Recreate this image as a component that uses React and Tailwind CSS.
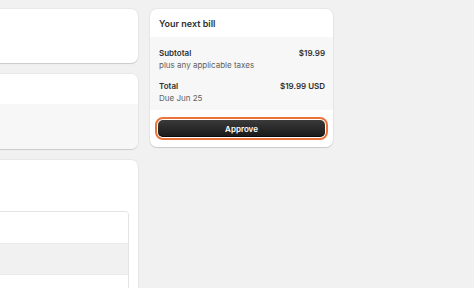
import React from 'react';

const cardShadow = 'shadow-[0_1px_1px_rgba(0,0,0,0.13),0_0_0_1px_rgba(0,0,0,0.035)]';

const BillRow = ({ label, note, amount }) => (
  <div className="flex justify-between">
    <div className="flex flex-col">
      <span className="font-semibold text-[#303030]">{label}</span>
      <span className="text-[#616161]">{note}</span>
    </div>
    <span className="font-semibold text-[#303030]">{amount}</span>
  </div>
);

export default function App() {
  return (
    <div
      className="w-[474px] h-[288px] overflow-hidden bg-[#f1f1f1] flex gap-3 pt-[9px] text-[8px] leading-[12px]"
      style={{ fontFamily: 'Inter, "Noto Sans", sans-serif' }}
    >
      {/* left column, partly cut off */}
      <div className="-ml-[20px] w-[158px] shrink-0 flex flex-col gap-[11px]">
        <div className={`h-[54px] shrink-0 bg-white rounded-[7px] ${cardShadow}`} />

        <div className={`h-[75px] shrink-0 bg-white rounded-[7px] overflow-hidden flex flex-col ${cardShadow}`}>
          <div className="h-[30px] bg-white" />
          <div className="flex-1 bg-[#f7f7f7]" />
        </div>

        <div className={`h-[200px] shrink-0 bg-white rounded-[7px] pt-[51px] pr-[9px] ${cardShadow}`}>
          <div className="border border-[#e3e3e3] rounded-[4px] overflow-hidden">
            <div className="h-[31px] bg-white" />
            <div className="h-[31px] bg-[#f1f1f1] border-t border-[#ebebeb]" />
            <div className="h-[40px] bg-white border-t border-[#ebebeb]" />
          </div>
        </div>
      </div>

      {/* bill summary */}
      <div className="w-[183px] shrink-0 self-start">
        <div className={`bg-white rounded-[7px] overflow-hidden ${cardShadow}`}>
          <div className="h-[28px] px-[9px] flex items-center pt-[2px] text-[9px] font-semibold text-[#303030]">
            Your next bill
          </div>
          <div className="bg-[#f7f7f7] pl-[9px] pr-[8px] pt-[10px] pb-[6px] flex flex-col gap-[9px]">
            <BillRow label="Subtotal" note="plus any applicable taxes" amount="$19.99" />
            <BillRow label="Total" note="Due Jun 25" amount="$19.99 USD" />
          </div>
          <div className="px-[8px] pt-[10px] pb-[10px]">
            <button className="w-full h-[17px] rounded-[5px] bg-gradient-to-b from-[#3a3a3a] to-[#1a1a1a] text-white font-semibold outline-2 outline-[#eb7339] outline-offset-1 shadow-[inset_0_-1px_0_rgba(0,0,0,0.6)]">
              Approve
            </button>
          </div>
        </div>
      </div>
    </div>
  );
}
